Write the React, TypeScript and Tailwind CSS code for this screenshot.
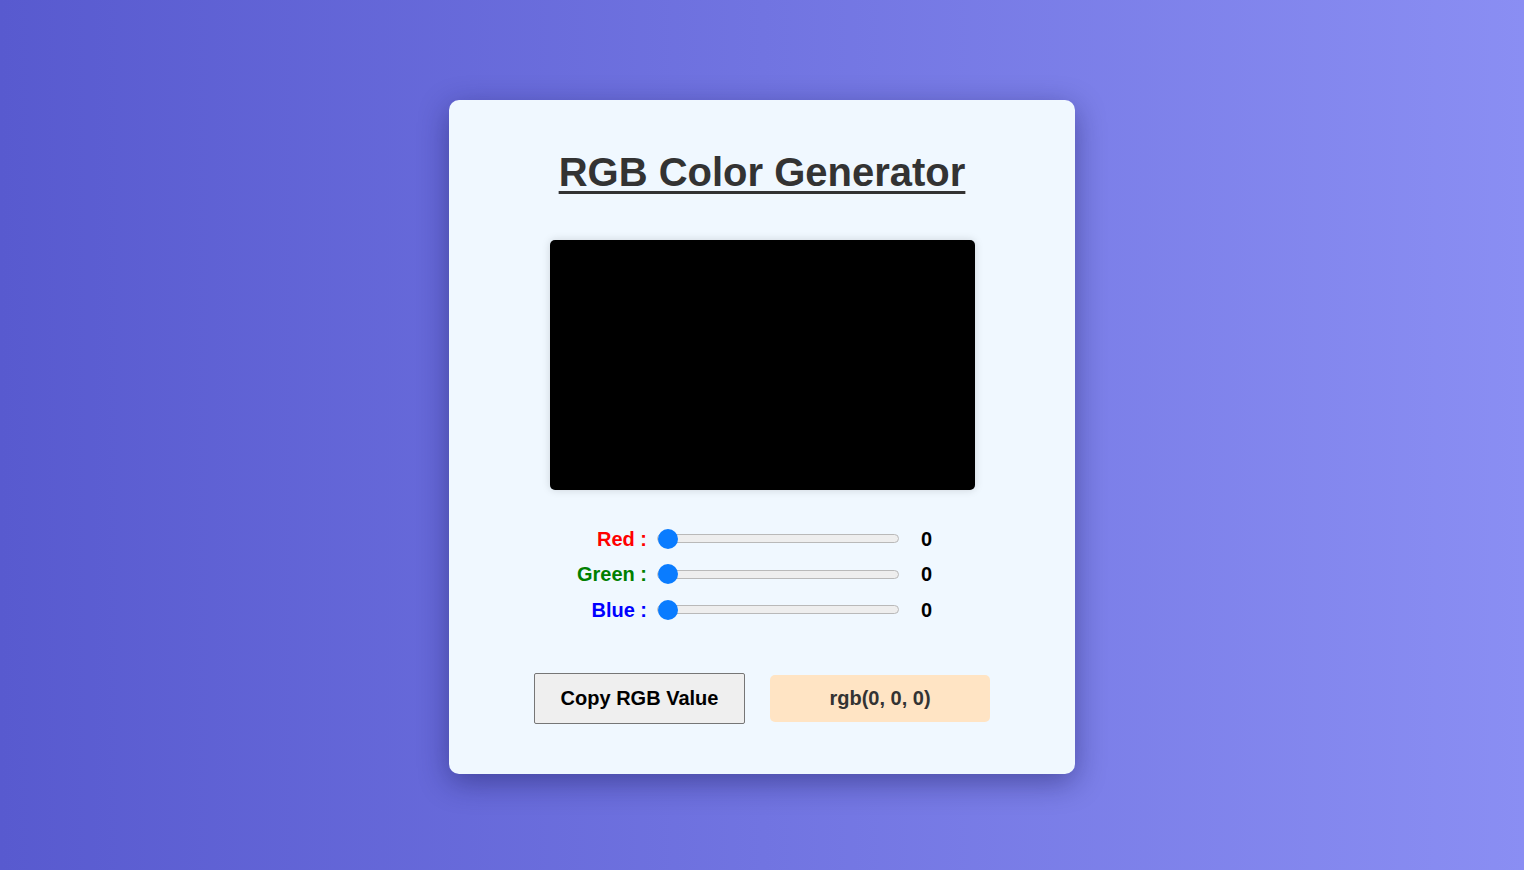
import React, { useState } from 'react';

const sliderCls =
  "appearance-none w-[242px] h-[9px] rounded-full bg-[#eeeeee] border border-[#b9b9b9] outline-none cursor-pointer " +
  "[&::-webkit-slider-thumb]:appearance-none [&::-webkit-slider-thumb]:w-[20px] [&::-webkit-slider-thumb]:h-[20px] " +
  "[&::-webkit-slider-thumb]:rounded-full [&::-webkit-slider-thumb]:bg-[#0a7cff] [&::-webkit-slider-thumb]:border-0 " +
  "[&::-moz-range-thumb]:w-[20px] [&::-moz-range-thumb]:h-[20px] [&::-moz-range-thumb]:rounded-full [&::-moz-range-thumb]:bg-[#0a7cff] [&::-moz-range-thumb]:border-0";

export default function App() {
  const [r, setR] = useState(0);
  const [g, setG] = useState(0);
  const [b, setB] = useState(0);
  const rgb = `rgb(${r}, ${g}, ${b})`;

  const rows = [
    { label: 'Red :', color: 'text-[#ff0000]', value: r, set: setR },
    { label: 'Green :', color: 'text-[#008000]', value: g, set: setG },
    { label: 'Blue :', color: 'text-[#0000ff]', value: b, set: setB },
  ];

  return (
    <div className="min-h-screen w-full flex justify-center items-start pt-[100px] bg-[linear-gradient(to_right,#585acf,#8a8ef3)] font-['Liberation_Sans',Arial,sans-serif]">
      <div className="w-[626px] h-[674px] bg-[#f0f8ff] rounded-[10px] shadow-[0_8px_30px_rgba(20,20,80,0.45)] flex flex-col items-center pt-[49px]">
        <h1 className="text-[40px] leading-[46px] font-bold text-[#333] underline underline-offset-[5px] decoration-[3px]">
          RGB Color Generator
        </h1>

        {/* colour preview */}
        <div
          className="mt-[45px] w-[425px] h-[250px] rounded-[5px] shadow-[0_0_8px_rgba(0,0,0,0.15)]"
          style={{ backgroundColor: rgb }}
        />

        <div className="mt-[31px] w-full flex flex-col">
          {rows.map((row) => (
            <div key={row.label} className="flex items-center h-[35.5px]">
              <span className={`w-[198px] text-right text-[20px] font-bold ${row.color}`}>{row.label}</span>
              <input
                type="range"
                min={0}
                max={255}
                value={row.value}
                onChange={(e) => row.set(Number(e.target.value))}
                className={`ml-[10px] ${sliderCls}`}
              />
              <span className="ml-[22px] text-[20px] font-bold text-black">{row.value}</span>
            </div>
          ))}
        </div>

        <div className="mt-[45px] flex items-center justify-center gap-[25px]">
          <button
            onClick={() => navigator.clipboard?.writeText(rgb)}
            className="w-[211px] h-[51px] bg-[#efefef] border border-[#767676] rounded-[2px] text-[20px] font-bold text-black"
          >
            Copy RGB Value
          </button>
          <div className="w-[220px] h-[47px] bg-[#ffe4c4] rounded-[5px] flex items-center justify-center text-[20px] font-bold text-[#333]">
            {rgb}
          </div>
        </div>
      </div>
    </div>
  );
}
